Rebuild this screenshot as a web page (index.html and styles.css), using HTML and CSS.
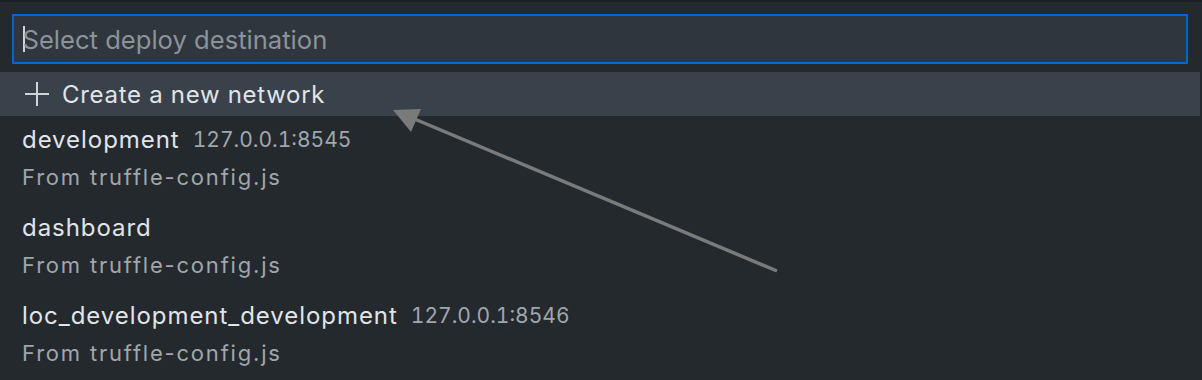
FILE: index.html
```html
<!DOCTYPE html>
<html>
<head>
<meta charset="utf-8">
<link rel="stylesheet" href="styles.css">
</head>
<body>
<div class="strip"></div>
<div class="picker">
  <div class="input"><span class="caret"></span><span class="placeholder">Select deploy destination</span></div>
  <div class="list">
    <div class="row active">
      <svg class="plus" width="26" height="26" viewBox="0 0 26 26"><path d="M13 1v24M1 13h24" stroke="#d1d5da" stroke-width="2" fill="none"/></svg>
      <span class="label">Create a new network</span>
    </div>
    <div class="item">
      <div class="line1"><span class="label">development</span><span class="desc">127.0.0.1:8545</span></div>
      <div class="line2">From truffle-config.js</div>
    </div>
    <div class="item">
      <div class="line1"><span class="label">dashboard</span></div>
      <div class="line2">From truffle-config.js</div>
    </div>
    <div class="item">
      <div class="line1"><span class="label">loc_development_development</span><span class="desc">127.0.0.1:8546</span></div>
      <div class="line2">From truffle-config.js</div>
    </div>
  </div>
</div>
<svg class="arrow" width="1202" height="380" viewBox="0 0 1202 380">
  <line x1="777" y1="271" x2="405" y2="115" stroke="#7a7a7a" stroke-width="3.5"/>
  <polygon points="393,110 421,109 411,132" fill="#7a7a7a"/>
</svg>
</body>
</html>
```
FILE: styles.css
```css
html, body {
  margin: 0;
  padding: 0;
  background: #24292e;
  font-family: Inter, "Noto Sans", sans-serif;
  width: 1202px;
  height: 380px;
  overflow: hidden;
  position: relative;
}
.strip {
  height: 2px;
  background: #1b1f23;
}
.picker {
  padding-top: 12px;
}
.input {
  margin: 0 14px 0 12px;
  height: 50px;
  box-sizing: border-box;
  border: 2px solid #0366d6;
  background: #2f363d;
  display: flex;
  align-items: center;
  padding-left: 9px;
}
.caret {
  width: 1.5px;
  height: 26px;
  background: #d1d5da;
  margin-right: -2px;
}
.placeholder {
  color: #8b939b;
  font-size: 25.6px;
}
.list {
  margin-top: 8px;
  width: 1200px;
}
.row {
  height: 44px;
  display: flex;
  align-items: center;
  padding-left: 24px;
  gap: 12px;
}
.row.active {
  background: #39414a;
}
.row .label {
  color: #e1e4e8;
  font-size: 24px;
  letter-spacing: 0.7px;
}
.item {
  height: 88px;
  box-sizing: border-box;
  padding: 4px 0 8px 22px;
}
.line1 {
  height: 38px;
  display: flex;
  align-items: center;
  gap: 13px;
}
.line1 .label {
  color: #e1e4e8;
  font-size: 24px;
  letter-spacing: 0.95px;
}
.desc {
  color: #a0a6ad;
  font-size: 21px;
  font-variant-numeric: tabular-nums;
  letter-spacing: 0;
}
.line2 {
  height: 38px;
  line-height: 39px;
  color: #a0a6ad;
  font-size: 22px;
  letter-spacing: 1.8px;
}
.arrow {
  position: absolute;
  left: 0;
  top: 0;
  pointer-events: none;
}
```
